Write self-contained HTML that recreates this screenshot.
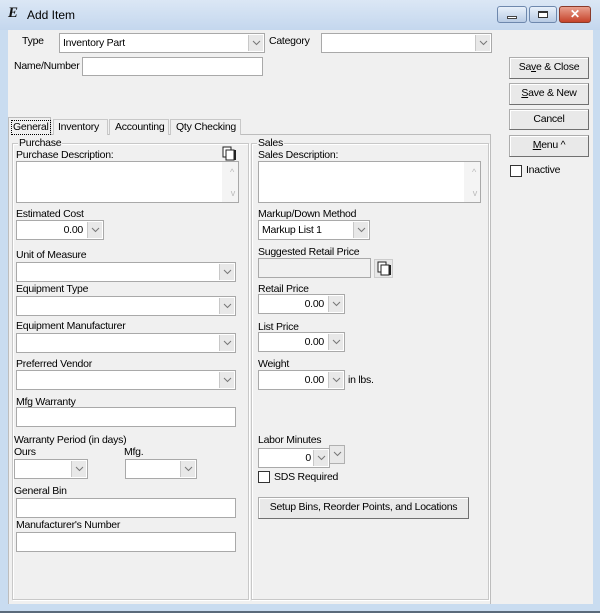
<!DOCTYPE html>
<html><head><meta charset="utf-8"><style>
*{box-sizing:border-box;margin:0;padding:0}
body{width:600px;height:613px;position:relative;overflow:hidden;background:#c9dcf0;font-family:"Liberation Sans",sans-serif;font-size:10.5px;letter-spacing:-0.25px;color:#000}
.a{position:absolute}
.t{position:absolute;white-space:nowrap;font-size:10.5px;line-height:13px}
.box{position:absolute;background:#fff;border:1px solid #a9a9a9}
.cb{position:absolute;background:#fff;border:1px solid #a9a9a9}
.cb .ar{position:absolute;right:1px;top:1px;bottom:1px;width:15px;background:#e8e8e8;border-left:1px solid #c8c8c8}
.ar svg{position:absolute;left:3px;top:50%;margin-top:-3px}
.btn{position:absolute;background:#e9e9e9;border:1px solid #adadad;border-right-color:#707070;border-bottom-color:#707070;box-shadow:inset 1px 1px 0 #fff;text-align:center;font-size:10.5px}
.grp{position:absolute;border:1px solid #c8c8c8;box-shadow:1px 1px 0 #fff inset, 1px 1px 0 #fff}
.lg{position:absolute;top:-7px;left:5px;background:#f0f0f0;padding:0 1px;line-height:13px}
.chk{position:absolute;width:12px;height:12px;background:#fff;border:1px solid #333}
.num{position:absolute;right:20px;top:3px;line-height:13px}
</style></head><body>
<div class="a" style="left:0;top:0;width:600px;height:30px;background:linear-gradient(#dbe7f5,#c4d7ee)"></div>
<div class="t" style="left:8px;top:7px;font-size:15px;font-style:italic;font-family:'Liberation Serif',serif;font-weight:bold;color:#111">E</div>
<div class="t" style="left:27px;top:9px;font-size:12px;letter-spacing:0">Add Item</div>
<div class="a" style="left:497px;top:6px;width:30px;height:17px;border:1px solid #6e88ad;border-radius:3px;background:linear-gradient(#e8f0fa,#b8cbe4)"><div class="a" style="left:9px;top:9px;width:10px;height:3px;background:#fff;border:1px solid #444"></div></div>
<div class="a" style="left:529px;top:6px;width:28px;height:17px;border:1px solid #6e88ad;border-radius:3px;background:linear-gradient(#e8f0fa,#b8cbe4)"><div class="a" style="left:8px;top:4px;width:10px;height:7px;border:1px solid #333;border-top-width:2px;background:#fff"></div></div>
<div class="a" style="left:559px;top:6px;width:32px;height:17px;border:1px solid #8a3a2a;border-radius:3px;background:linear-gradient(#e9a08e,#c6432a)"><div class="t" style="left:10px;top:1px;color:#fff;font-weight:bold;font-size:12px">✕</div></div>
<div class="a" style="left:8px;top:30px;width:585px;height:574px;background:#f0f0f0"></div>
<div class="a" style="left:0;top:604px;width:600px;height:9px;background:#c9dcf0;border-bottom:2px solid #5a6a7a"></div>

<div class="t" style="left:22px;top:35px">Type</div>
<div class="cb" style="left:59px;top:33px;width:206px;height:20px"><div class="t" style="left:3px;top:3px">Inventory Part</div><div class="ar"><svg width="9" height="6"><path d="M1 1L4.5 4.5L8 1" fill="none" stroke="#777"/></svg></div></div>
<div class="t" style="left:269px;top:35px">Category</div>
<div class="cb" style="left:321px;top:33px;width:171px;height:20px"><div class="ar"><svg width="9" height="6"><path d="M1 1L4.5 4.5L8 1" fill="none" stroke="#777"/></svg></div></div>
<div class="t" style="left:14px;top:60px">Name/Number</div>
<div class="box" style="left:82px;top:57px;width:181px;height:19px"></div>

<div class="btn" style="left:509px;top:57px;width:80px;height:22px;line-height:19px">Sa<u>v</u>e &amp; Close</div>
<div class="btn" style="left:509px;top:83px;width:80px;height:22px;line-height:19px"><u>S</u>ave &amp; New</div>
<div class="btn" style="left:509px;top:109px;width:80px;height:21px;line-height:18px">Cancel</div>
<div class="btn" style="left:509px;top:135px;width:80px;height:22px;line-height:19px"><u>M</u>enu ^</div>
<div class="chk" style="left:510px;top:165px"></div>
<div class="t" style="left:526px;top:164px">Inactive</div>

<div class="a" style="left:8px;top:134px;width:483px;height:470px;border:1px solid #bdbdbd;border-bottom:none;background:#f0f0f0"></div>
<div class="a" style="left:8px;top:117px;width:43px;height:18px;border:1px solid #bdbdbd;border-bottom:none;background:#f0f0f0"><div class="t" style="left:2px;top:2px;border:1px dotted #000;padding:0 1px">General</div></div>
<div class="a" style="left:53px;top:119px;width:55px;height:16px;border:1px solid #c8c8c8;border-bottom:none;background:#f0f0f0"><div class="t" style="left:4px;top:1px">Inventory</div></div>
<div class="a" style="left:109px;top:119px;width:60px;height:16px;border:1px solid #c8c8c8;border-bottom:none;background:#f0f0f0"><div class="t" style="left:5px;top:1px">Accounting</div></div>
<div class="a" style="left:170px;top:119px;width:71px;height:16px;border:1px solid #c8c8c8;border-bottom:none;background:#f0f0f0"><div class="t" style="left:5px;top:1px">Qty Checking</div></div>

<div class="grp" style="left:12px;top:143px;width:237px;height:457px"><div class="lg">Purchase</div></div>
<div class="grp" style="left:251px;top:143px;width:238px;height:457px"><div class="lg">Sales</div></div>

<div class="t" style="left:16px;top:149px">Purchase Description:</div>
<div class="a" style="left:222px;top:146px;width:14px;height:15px"><svg width="14" height="15"><rect x="1" y="1" width="8" height="10" fill="#fff" stroke="#222"/><rect x="4" y="4" width="8" height="10" fill="#fff" stroke="#222"/><path d="M13 4V14" stroke="#222" stroke-width="2"/></svg></div>
<div class="box" style="left:16px;top:161px;width:223px;height:42px"><div class="a" style="right:0;top:0;bottom:0;width:16px;background:#f4f4f4"></div><div class="t" style="right:4px;top:4px;color:#bbb;font-size:9px">^</div><div class="t" style="right:3px;top:25px;color:#bbb;font-size:9px">v</div></div>
<div class="t" style="left:16px;top:208px">Estimated Cost</div>
<div class="cb" style="left:16px;top:220px;width:88px;height:20px"><div class="num">0.00</div><div class="ar"><svg width="9" height="6"><path d="M1 1L4.5 4.5L8 1" fill="none" stroke="#777"/></svg></div></div>
<div class="t" style="left:16px;top:249px">Unit of Measure</div>
<div class="cb" style="left:16px;top:262px;width:220px;height:20px"><div class="ar"><svg width="9" height="6"><path d="M1 1L4.5 4.5L8 1" fill="none" stroke="#777"/></svg></div></div>
<div class="t" style="left:16px;top:283px">Equipment Type</div>
<div class="cb" style="left:16px;top:296px;width:220px;height:20px"><div class="ar"><svg width="9" height="6"><path d="M1 1L4.5 4.5L8 1" fill="none" stroke="#777"/></svg></div></div>
<div class="t" style="left:16px;top:320px">Equipment Manufacturer</div>
<div class="cb" style="left:16px;top:333px;width:220px;height:20px"><div class="ar"><svg width="9" height="6"><path d="M1 1L4.5 4.5L8 1" fill="none" stroke="#777"/></svg></div></div>
<div class="t" style="left:16px;top:358px">Preferred Vendor</div>
<div class="cb" style="left:16px;top:370px;width:220px;height:20px"><div class="ar"><svg width="9" height="6"><path d="M1 1L4.5 4.5L8 1" fill="none" stroke="#777"/></svg></div></div>
<div class="t" style="left:16px;top:396px">Mfg Warranty</div>
<div class="box" style="left:16px;top:407px;width:220px;height:20px"></div>
<div class="t" style="left:14px;top:434px">Warranty Period (in days)</div>
<div class="t" style="left:14px;top:446px">Ours</div>
<div class="t" style="left:124px;top:446px">Mfg.</div>
<div class="cb" style="left:14px;top:459px;width:74px;height:20px"><div class="ar"><svg width="9" height="6"><path d="M1 1L4.5 4.5L8 1" fill="none" stroke="#777"/></svg></div></div>
<div class="cb" style="left:125px;top:459px;width:72px;height:20px"><div class="ar"><svg width="9" height="6"><path d="M1 1L4.5 4.5L8 1" fill="none" stroke="#777"/></svg></div></div>
<div class="t" style="left:14px;top:485px">General Bin</div>
<div class="box" style="left:16px;top:498px;width:220px;height:20px"></div>
<div class="t" style="left:16px;top:519px">Manufacturer's Number</div>
<div class="box" style="left:16px;top:532px;width:220px;height:20px"></div>

<div class="t" style="left:258px;top:149px">Sales Description:</div>
<div class="box" style="left:258px;top:161px;width:223px;height:42px"><div class="a" style="right:0;top:0;bottom:0;width:16px;background:#f4f4f4"></div><div class="t" style="right:4px;top:4px;color:#bbb;font-size:9px">^</div><div class="t" style="right:3px;top:25px;color:#bbb;font-size:9px">v</div></div>
<div class="t" style="left:258px;top:208px">Markup/Down Method</div>
<div class="cb" style="left:258px;top:220px;width:112px;height:20px"><div class="t" style="left:3px;top:3px">Markup List 1</div><div class="ar"><svg width="9" height="6"><path d="M1 1L4.5 4.5L8 1" fill="none" stroke="#777"/></svg></div></div>
<div class="t" style="left:258px;top:246px">Suggested Retail Price</div>
<div class="a" style="left:258px;top:258px;width:113px;height:20px;background:#f0f0f0;border:1px solid #a9a9a9"></div>
<div class="a" style="left:374px;top:259px;width:19px;height:19px;background:#e8e8e8;border:1px solid #ccc"><svg width="17" height="17"><rect x="3" y="2" width="8" height="10" fill="#fff" stroke="#222"/><rect x="6" y="5" width="8" height="10" fill="#fff" stroke="#222"/><path d="M15 5V15" stroke="#222" stroke-width="2"/></svg></div>
<div class="t" style="left:258px;top:283px">Retail Price</div>
<div class="cb" style="left:258px;top:294px;width:87px;height:20px"><div class="num">0.00</div><div class="ar"><svg width="9" height="6"><path d="M1 1L4.5 4.5L8 1" fill="none" stroke="#777"/></svg></div></div>
<div class="t" style="left:258px;top:321px">List Price</div>
<div class="cb" style="left:258px;top:332px;width:87px;height:20px"><div class="num">0.00</div><div class="ar"><svg width="9" height="6"><path d="M1 1L4.5 4.5L8 1" fill="none" stroke="#777"/></svg></div></div>
<div class="t" style="left:258px;top:358px">Weight</div>
<div class="cb" style="left:258px;top:370px;width:87px;height:20px"><div class="num">0.00</div><div class="ar"><svg width="9" height="6"><path d="M1 1L4.5 4.5L8 1" fill="none" stroke="#777"/></svg></div></div>
<div class="t" style="left:348px;top:374px">in lbs.</div>
<div class="t" style="left:258px;top:434px">Labor Minutes</div>
<div class="a" style="left:329px;top:445px;width:16px;height:19px;background:#e8e8e8;border:1px solid #b0b0b0"><svg width="9" height="6" style="position:absolute;left:3px;top:5px"><path d="M1 1L4.5 4.5L8 1" fill="none" stroke="#777"/></svg></div>
<div class="cb" style="left:258px;top:448px;width:72px;height:20px"><div class="num" style="right:18px">0</div><div class="ar"><svg width="9" height="6"><path d="M1 1L4.5 4.5L8 1" fill="none" stroke="#777"/></svg></div></div>
<div class="chk" style="left:258px;top:471px"></div>
<div class="t" style="left:274px;top:471px">SDS Required</div>
<div class="btn" style="left:258px;top:497px;width:211px;height:22px;line-height:19px">Setup Bins, Reorder Points, and Locations</div>
</body></html>
